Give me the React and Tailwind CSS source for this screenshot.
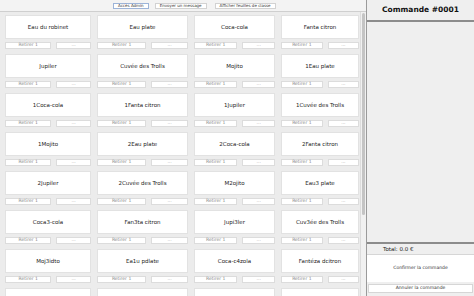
const products = [
  'Eau du robinet', 'Eau plate', 'Coca-cola', 'Fanta citron',
  'Jupiler', 'Cuvée des Trolls', 'Mojito', '1Eau plate',
  '1Coca-cola', '1Fanta citron', '1Jupiler', '1Cuvée des Trolls',
  '1Mojito', '2Eau plate', '2Coca-cola', '2Fanta citron',
  '2Jupiler', '2Cuvée des Trolls', 'M2ojito', 'Eau3 plate',
  'Coca3-cola', 'Fan3ta citron', 'Jupi3ler', 'Cuv3ée des Trolls',
  'Moj3idto', 'Ea1u pdlate', 'Coca-c4zola', 'Fantéza dcitron',
]

function ProductCell({ name }) {
  return (
    <div className="flex flex-col">
      <div className="h-[24px] bg-white border border-[#e2e2e2] flex items-center justify-center text-[5.5px] text-[#222]">
        {name}
      </div>
      <div className="mt-[3px] grid grid-cols-[4fr_3fr] gap-[5px] h-[6px]">
        <button className="bg-white border border-[#dcdcdc] text-[4.5px] leading-none text-[#888] flex items-center justify-center">
          Retirer 1
        </button>
        <button className="bg-white border border-[#dcdcdc] text-[4.5px] leading-none text-[#999] flex items-center justify-center">
          ...
        </button>
      </div>
    </div>
  )
}

export default function App() {
  return (
    <div
      className="w-[474px] h-[296px] flex overflow-hidden bg-[#ececec] text-[#222]"
      style={{ fontFamily: '"DejaVu Sans", Verdana, sans-serif' }}
    >
      {/* left: products */}
      <div className="w-[366px] flex flex-col">
        <div className="h-[12px] shrink-0 bg-[#f3f3f3] border-b border-[#cfcfcf] flex items-center pl-[113px] gap-[5px]">
          <button className="h-[6px] px-[4px] bg-white border border-[#9db4d8] text-[4px] leading-none text-[#333]">
            Accès Admin
          </button>
          <button className="h-[6px] px-[4px] ml-[1px] bg-white border border-[#d2d2d2] text-[4px] leading-none text-[#333]">
            Envoyer un message
          </button>
          <button className="h-[6px] px-[4px] ml-[3px] bg-white border border-[#d2d2d2] text-[4px] leading-none text-[#333]">
            Afficher feuilles de classe
          </button>
        </div>
        <div className="flex-1 flex min-h-0">
          <div className="flex-1 overflow-hidden pl-[5px] pt-[3px]">
            <div className="grid grid-cols-[86px_91px_81px_78px] gap-x-[6px] gap-y-[6px]">
              {products.map((p) => (
                <ProductCell key={p} name={p} />
              ))}
              {/* next row, only its top edge shows */}
              <div className="h-[24px] bg-white border border-[#e2e2e2]" />
              <div className="h-[24px] bg-white border border-[#e2e2e2]" />
              <div className="h-[24px] bg-white border border-[#e2e2e2]" />
              <div className="h-[24px] bg-white border border-[#e2e2e2]" />
            </div>
          </div>
          <div className="w-[6px] shrink-0 border-l border-[#dcdcdc] bg-[#f1f1f1] flex justify-center pt-[1px]">
            <div className="w-[3px] h-[202px] rounded-full bg-[#c4c4c4]" />
          </div>
        </div>
      </div>

      {/* right: order */}
      <div className="flex-1 flex flex-col border-l border-[#9a9a9a] bg-[#efefef]">
        <div className="h-[22px] shrink-0 border-b-2 border-[#8c8c8c] flex items-center justify-center text-[7.5px] font-bold text-[#111]">
          Commande #0001
        </div>
        <div className="flex-1" />
        <div className="h-[13px] shrink-0 border-t-2 border-[#8c8c8c] border-b border-b-[#d6d6d6] flex items-center pl-[16px] text-[5.5px] text-[#222]">
          Total: 0.0 €
        </div>
        <div className="h-[27px] shrink-0 bg-white flex items-center justify-center text-[4.5px] text-[#333]">
          Confirmer la commande
        </div>
        <div className="h-[2px] shrink-0" />
        <div className="h-[9px] shrink-0 mx-[1px] mb-[3px] bg-white border border-[#d6d6d6] flex items-center justify-center text-[4.5px] text-[#333]">
          Annuler la commande
        </div>
      </div>
    </div>
  )
}
